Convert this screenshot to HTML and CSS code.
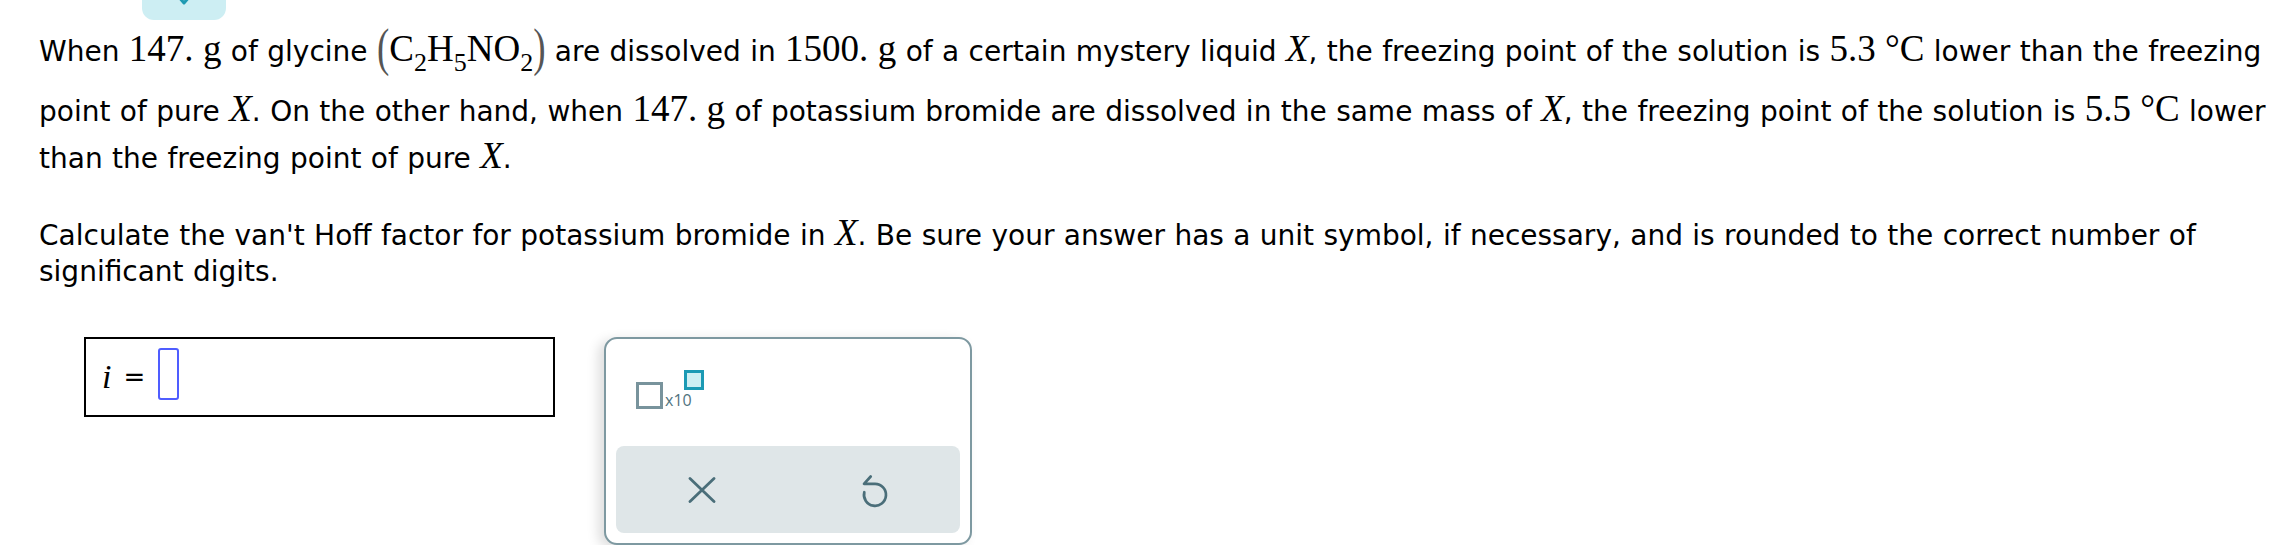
FILE: index.html
```html
<!DOCTYPE html>
<html lang="en">
<head>
<meta charset="utf-8">
<title>van't Hoff factor</title>
<link rel="stylesheet" href="styles.css">
</head>
<body>
<div class="tab">
  <svg class="tab-icon" width="16" height="8" viewBox="0 0 16 8"><path d="M2 -4 L8 3 L14 -4" fill="none" stroke="#1f9ab2" stroke-width="3" stroke-linecap="round" stroke-linejoin="round"/></svg>
</div>
<div class="content">
  <p class="q q1">When <span class="m">147.</span> <span class="m">g</span> of glycine <span class="formula"><span class="paren">(</span><span class="m">C</span><span class="sub">2</span><span class="m">H</span><span class="sub">5</span><span class="m">NO</span><span class="sub">2</span><span class="paren">)</span></span> are dissolved in <span class="m">1500.</span> <span class="m">g</span> of a certain mystery liquid <span class="m mi">X</span>, the freezing point of the solution is <span class="m">5.3&nbsp;°C</span> lower than the freezing point of pure <span class="m mi">X</span>. On the other hand, when <span class="m">147.</span> <span class="m">g</span> of potassium bromide are dissolved in the same mass of <span class="m mi">X</span>, the freezing point of the solution is <span class="m">5.5&nbsp;°C</span> lower than the freezing point of pure <span class="m mi">X</span>.</p>
  <p class="q q2">Calculate the van't Hoff factor for potassium bromide in <span class="m mi">X</span>. Be sure your answer has a unit symbol, if necessary, and is rounded to the correct number of significant digits.</p>
  <div class="answer">
    <div class="input-box">
      <span class="var">i</span>
      <span class="eq">=</span>
      <span class="slot"></span>
    </div>
    <div class="panel">
      <div class="tools">
        <svg class="sci" width="70" height="41" viewBox="0 0 70 41">
          <rect x="1.5" y="14.5" width="24" height="24" fill="none" stroke="#78939c" stroke-width="3"/>
          <text x="29" y="37" font-family="Open Sans, sans-serif" font-size="16" fill="#4f737e">x10</text>
          <rect x="49.5" y="2.5" width="17" height="17" fill="#cdeff3" stroke="#1b9ab4" stroke-width="3"/>
        </svg>
      </div>
      <div class="actions">
        <button class="btn" type="button" aria-label="Clear">
          <svg width="28" height="26" viewBox="0 0 28 26"><path d="M2 1.5 L26 24.5 M26 1.5 L2 24.5" stroke="#4a6e79" stroke-width="2.8" stroke-linecap="round" fill="none"/></svg>
        </button>
        <button class="btn" type="button" aria-label="Undo">
          <svg width="28" height="36" viewBox="0 0 28 36"><path d="M10.7 4.5 L4 11.8 L15 11.8 A11 11 0 1 1 4.3 20.2" stroke="#4a6e79" stroke-width="2.7" stroke-linecap="round" stroke-linejoin="round" fill="none"/></svg>
        </button>
      </div>
    </div>
  </div>
</div>
</body>
</html>
```

FILE: styles.css
```css
body {
  margin: 0;
  background: #ffffff;
  color: #000000;
  font-family: "DejaVu Sans", Verdana, sans-serif;
}

.tab {
  width: 84px;
  height: 20px;
  margin-left: 142px;
  background: #cdeef3;
  border-radius: 0 0 12px 12px;
  display: flex;
  justify-content: center;
  align-items: flex-start;
}

.content {
  padding: 0 10px 0 39px;
}

.q {
  margin: 0;
  font-size: 28px;
  word-spacing: 0.5px;
}

.q1 {
  margin-top: 8px;
  line-height: 47px;
}

.q2 {
  margin-top: 32px;
  line-height: 36px;
}

.m {
  font-family: "Liberation Serif", "Times New Roman", serif;
  font-size: 37px;
  line-height: 1;
  word-spacing: 0;
}

.mi {
  font-style: italic;
}

.formula {
  display: inline-block;
  line-height: 1;
  padding-bottom: 12px;
}

.sub {
  font-family: "Liberation Serif", "Times New Roman", serif;
  font-size: 26px;
  line-height: 1;
  vertical-align: -10px;
}

.paren {
  display: inline-block;
  font-family: "Liberation Serif", "Times New Roman", serif;
  font-size: 37px;
  line-height: 1;
  color: #555555;
  transform: scaleY(1.42);
  transform-origin: 50% 60%;
}

.answer {
  display: flex;
  align-items: flex-start;
  gap: 49px;
  margin-top: 47px;
  padding-left: 45px;
}

.input-box {
  box-sizing: border-box;
  width: 471px;
  height: 80px;
  border: 2px solid #000000;
  display: flex;
  align-items: center;
  padding-left: 16px;
}

.var {
  font-family: "Liberation Serif", "Times New Roman", serif;
  font-style: italic;
  font-size: 34px;
}

.eq {
  font-size: 26px;
  margin-left: 12px;
}

.slot {
  box-sizing: border-box;
  width: 21px;
  height: 52px;
  margin-left: 13px;
  margin-top: -6px;
  border: 2px solid #4f5dff;
  border-radius: 3px;
}

.panel {
  box-sizing: border-box;
  width: 368px;
  height: 208px;
  border: 2px solid #7e99a1;
  border-radius: 13px;
  background: #ffffff;
  box-shadow: -6px 3px 12px rgba(0, 0, 0, 0.13);
  display: flex;
  flex-direction: column;
}

.tools {
  height: 107px;
  box-sizing: border-box;
  padding: 30px 0 0 30px;
}

.sci {
  display: block;
}

.actions {
  display: flex;
  margin: 0 10px;
  height: 87px;
  background: #dfe6e8;
  border-radius: 8px;
}

.btn {
  flex: 1;
  border: 0;
  padding: 0;
  background: transparent;
  display: flex;
  align-items: center;
  justify-content: center;
}

.btn svg {
  display: block;
}
```
